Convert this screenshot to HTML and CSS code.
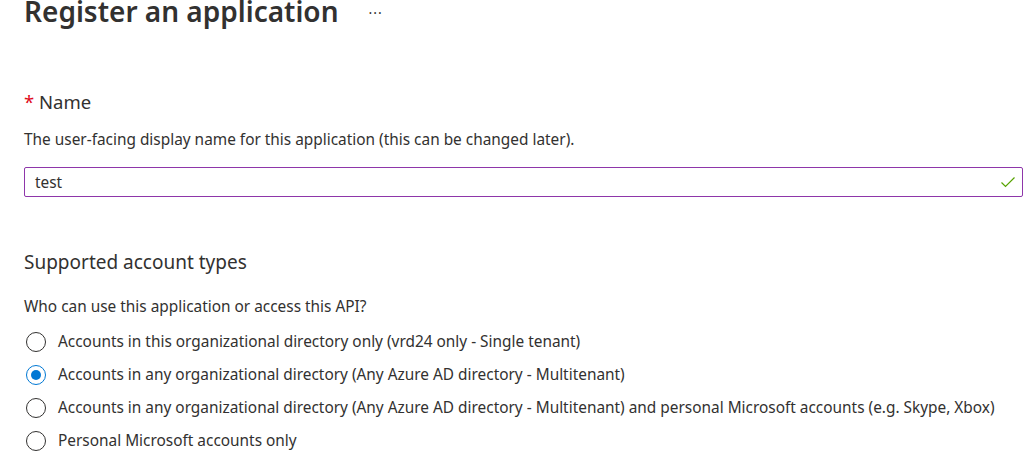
FILE: index.html
```html
<!DOCTYPE html>
<html lang="en">
<head>
<meta charset="utf-8">
<title>Register an application</title>
<link rel="stylesheet" href="styles.css">
</head>
<body>
<div class="page">
  <header class="title-row">
    <h1 class="title">Register an application</h1>
    <span class="more">&middot;&middot;&middot;</span>
  </header>

  <section class="field">
    <div class="label"><span class="req">*</span> Name</div>
    <p class="desc">The user-facing display name for this application (this can be changed later).</p>
    <div class="input">
      <span class="input-text">test</span>
      <svg class="check" width="16" height="16" viewBox="0 0 16 16"><path d="M1.5 8.5 L5.5 12.5 L14.5 3.5" fill="none" stroke="#57a300" stroke-width="1.2"/></svg>
    </div>
  </section>

  <section class="accounts">
    <h2 class="section-title">Supported account types</h2>
    <p class="desc desc-who">Who can use this application or access this API?</p>
    <div class="radios">
      <label class="radio"><span class="circle"></span>Accounts in this organizational directory only (vrd24 only - Single tenant)</label>
      <label class="radio checked"><span class="circle"><span class="dot"></span></span>Accounts in any organizational directory (Any Azure AD directory - Multitenant)</label>
      <label class="radio"><span class="circle"></span>Accounts in any organizational directory (Any Azure AD directory - Multitenant) and personal Microsoft accounts (e.g. Skype, Xbox)</label>
      <label class="radio"><span class="circle"></span>Personal Microsoft accounts only</label>
    </div>
  </section>
</div>
</body>
</html>
```

FILE: styles.css
```css
html, body {
  margin: 0;
  padding: 0;
  background: #ffffff;
}
body {
  font-family: "Noto Sans", "Open Sans", sans-serif;
  color: #323130;
  font-size: 15.4px;
}
.page {
  padding: 0 8px 0 24px;
}
.title-row {
  display: flex;
  align-items: flex-start;
  gap: 30px;
  height: 28px;
  margin-top: -7px;
}
.title {
  margin: 0;
  font-size: 28px;
  font-weight: 600;
  line-height: 36px;
  color: #323130;
}
.more {
  font-size: 14px;
  line-height: 14px;
  color: #323130;
  letter-spacing: 1px;
  margin-top: 13px;
}
.field {
  margin-top: 69px;
}
.label {
  font-size: 18.5px;
  line-height: 24px;
}
.req {
  color: #e00b1c;
}
.desc {
  margin: 16px 0 0;
  line-height: 20px;
}
.input {
  margin-top: 17px;
  height: 30px;
  box-sizing: border-box;
  border: 1px solid #8e36aa;
  border-radius: 2px;
  display: flex;
  align-items: center;
  justify-content: space-between;
  padding: 0 6px 0 10px;
}
.check {
  display: block;
}
.accounts {
  margin-top: 53px;
}
.section-title {
  margin: 0;
  font-size: 19px;
  font-weight: 400;
  line-height: 24px;
}
.desc-who {
  margin-top: 23px;
}
.radios {
  margin-top: 15px;
  display: flex;
  flex-direction: column;
  gap: 13px;
}
.radio {
  display: flex;
  align-items: center;
  gap: 12px;
  line-height: 20px;
  padding-left: 2px;
}
.circle {
  width: 20px;
  height: 20px;
  box-sizing: border-box;
  border: 1px solid #323130;
  border-radius: 50%;
  display: flex;
  align-items: center;
  justify-content: center;
  flex: none;
}
.checked .circle {
  border-color: #0078d4;
}
.dot {
  width: 10px;
  height: 10px;
  border-radius: 50%;
  background: #0078d4;
}
```
